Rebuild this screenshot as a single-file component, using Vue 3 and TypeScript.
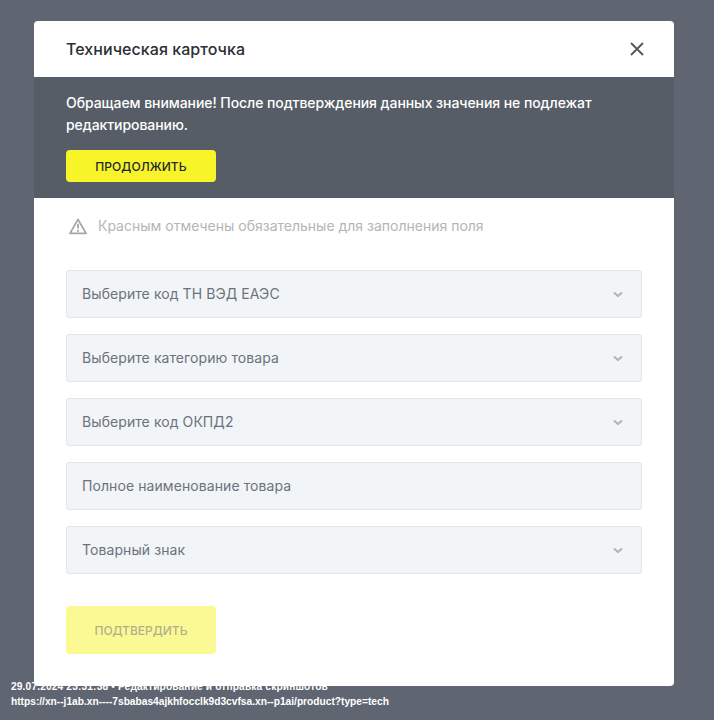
<script setup lang="ts">
interface Field { label: string; arrow: boolean }
const fields: Field[] = [
  { label: 'Выберите код ТН ВЭД ЕАЭС', arrow: true },
  { label: 'Выберите категорию товара', arrow: true },
  { label: 'Выберите код ОКПД2', arrow: true },
  { label: 'Полное наименование товара', arrow: false },
  { label: 'Товарный знак', arrow: true },
]
</script>

<template>
  <div class="page">
    <div class="modal">
      <header class="head">
        <h2 class="title">Техническая карточка</h2>
        <button class="close" aria-label="Закрыть">
          <svg width="14" height="14" viewBox="0 0 14 14" fill="none">
            <path d="M1 1l12 12M13 1L1 13" stroke="#4f5661" stroke-width="1.8" />
          </svg>
        </button>
      </header>
      <section class="banner">
        <p class="banner-text">Обращаем внимание! После подтверждения данных значения не подлежат редактированию.</p>
        <button class="btn primary">ПРОДОЛЖИТЬ</button>
      </section>
      <div class="body">
        <div class="note">
          <svg width="18" height="17" viewBox="0 0 18 17" fill="none">
            <path d="M9 1.4L17 15.4H1L9 1.4Z" stroke="#a3a6ab" stroke-width="1.8" stroke-linejoin="round" />
            <path d="M9 5.8v4.8" stroke="#a3a6ab" stroke-width="1.8" />
            <circle cx="9" cy="12.8" r="1.1" fill="#a3a6ab" />
          </svg>
          <span class="note-text">Красным отмечены обязательные для заполнения поля</span>
        </div>
        <div class="fields">
          <div v-for="f in fields" :key="f.label" class="field">
            <span class="field-label">{{ f.label }}</span>
            <svg v-if="f.arrow" width="10" height="7" viewBox="0 0 10 7" fill="none">
              <path d="M1 1.5l4 3.6 4-3.6" stroke="#b0b4b9" stroke-width="2" />
            </svg>
          </div>
        </div>
        <button class="btn disabled">ПОДТВЕРДИТЬ</button>
      </div>
    </div>
    <div class="stamp">
      <div class="stamp-first">29.07.2024 23:31:38 • Редактирование и отправка скриншотов</div>
      <div>https://xn--j1ab.xn----7sbabas4ajkhfocclk9d3cvfsa.xn--p1ai/product?type=tech</div>
    </div>
  </div>
</template>

<style>
html, body { margin: 0; background: #5f6672; }
</style>

<style scoped>
.page {
  position: relative;
  height: 720px;
  overflow: hidden;
  box-sizing: border-box;
  padding-top: 21px;
  background: #5f6672;
  font-family: Inter, "Noto Sans", sans-serif;
}
.modal {
  width: 640px;
  height: 665px;
  margin-left: 34px;
  background: #fff;
  border-radius: 4px;
  overflow: hidden;
}
.head {
  height: 56px;
  box-sizing: border-box;
  padding: 0 30px 0 32px;
  display: flex;
  align-items: center;
  justify-content: space-between;
}
.title {
  margin: 0;
  font-size: 16px;
  font-weight: 500;
  line-height: 24px;
  letter-spacing: 0.05px;
  color: #2b2f36;
}
.close {
  display: flex;
  padding: 0;
  border: 0;
  background: none;
}
.banner {
  height: 121px;
  box-sizing: border-box;
  padding: 15px 32px;
  background: #565d67;
}
.banner-text {
  margin: 0 0 14px;
  font-size: 14px;
  font-weight: 500;
  line-height: 22px;
  letter-spacing: -0.065px;
  color: #fff;
}
.btn {
  display: block;
  width: 150px;
  border: 0;
  border-radius: 4px;
  font-family: inherit;
  font-size: 12px;
  font-weight: 500;
}
.primary {
  height: 32px;
  background: #f7f52a;
  color: #23272e;
  letter-spacing: 0.06px;
}
.disabled {
  height: 48px;
  margin-top: 32px;
  background: #fbf994;
  color: #b0b18c;
}
.body {
  padding: 18px 32px 0;
}
.note {
  display: flex;
  align-items: center;
  gap: 11px;
  height: 20px;
  margin-bottom: 34px;
  padding-left: 3px;
  font-size: 14px;
  color: #b3b5b9;
}
.note-text {
  padding-bottom: 2px;
}
.fields {
  display: flex;
  flex-direction: column;
  gap: 16px;
}
.field {
  height: 48px;
  box-sizing: border-box;
  padding: 0 18px 0 15px;
  display: flex;
  align-items: center;
  justify-content: space-between;
  background: #f2f5f8;
  border: 1px solid #e2e4e6;
  border-radius: 3px;
  font-size: 14px;
  color: #6b727c;
}
.field-label {
  padding-bottom: 2px;
  letter-spacing: 0.08px;
}
.stamp {
  position: absolute;
  left: 11px;
  top: 679px;
  font-family: "Liberation Sans", Arial, sans-serif;
  font-size: 10.2px;
  font-weight: 700;
  line-height: 15px;
  color: #fff;
}
.stamp-first {
  letter-spacing: 0.14px;
}
</style>
